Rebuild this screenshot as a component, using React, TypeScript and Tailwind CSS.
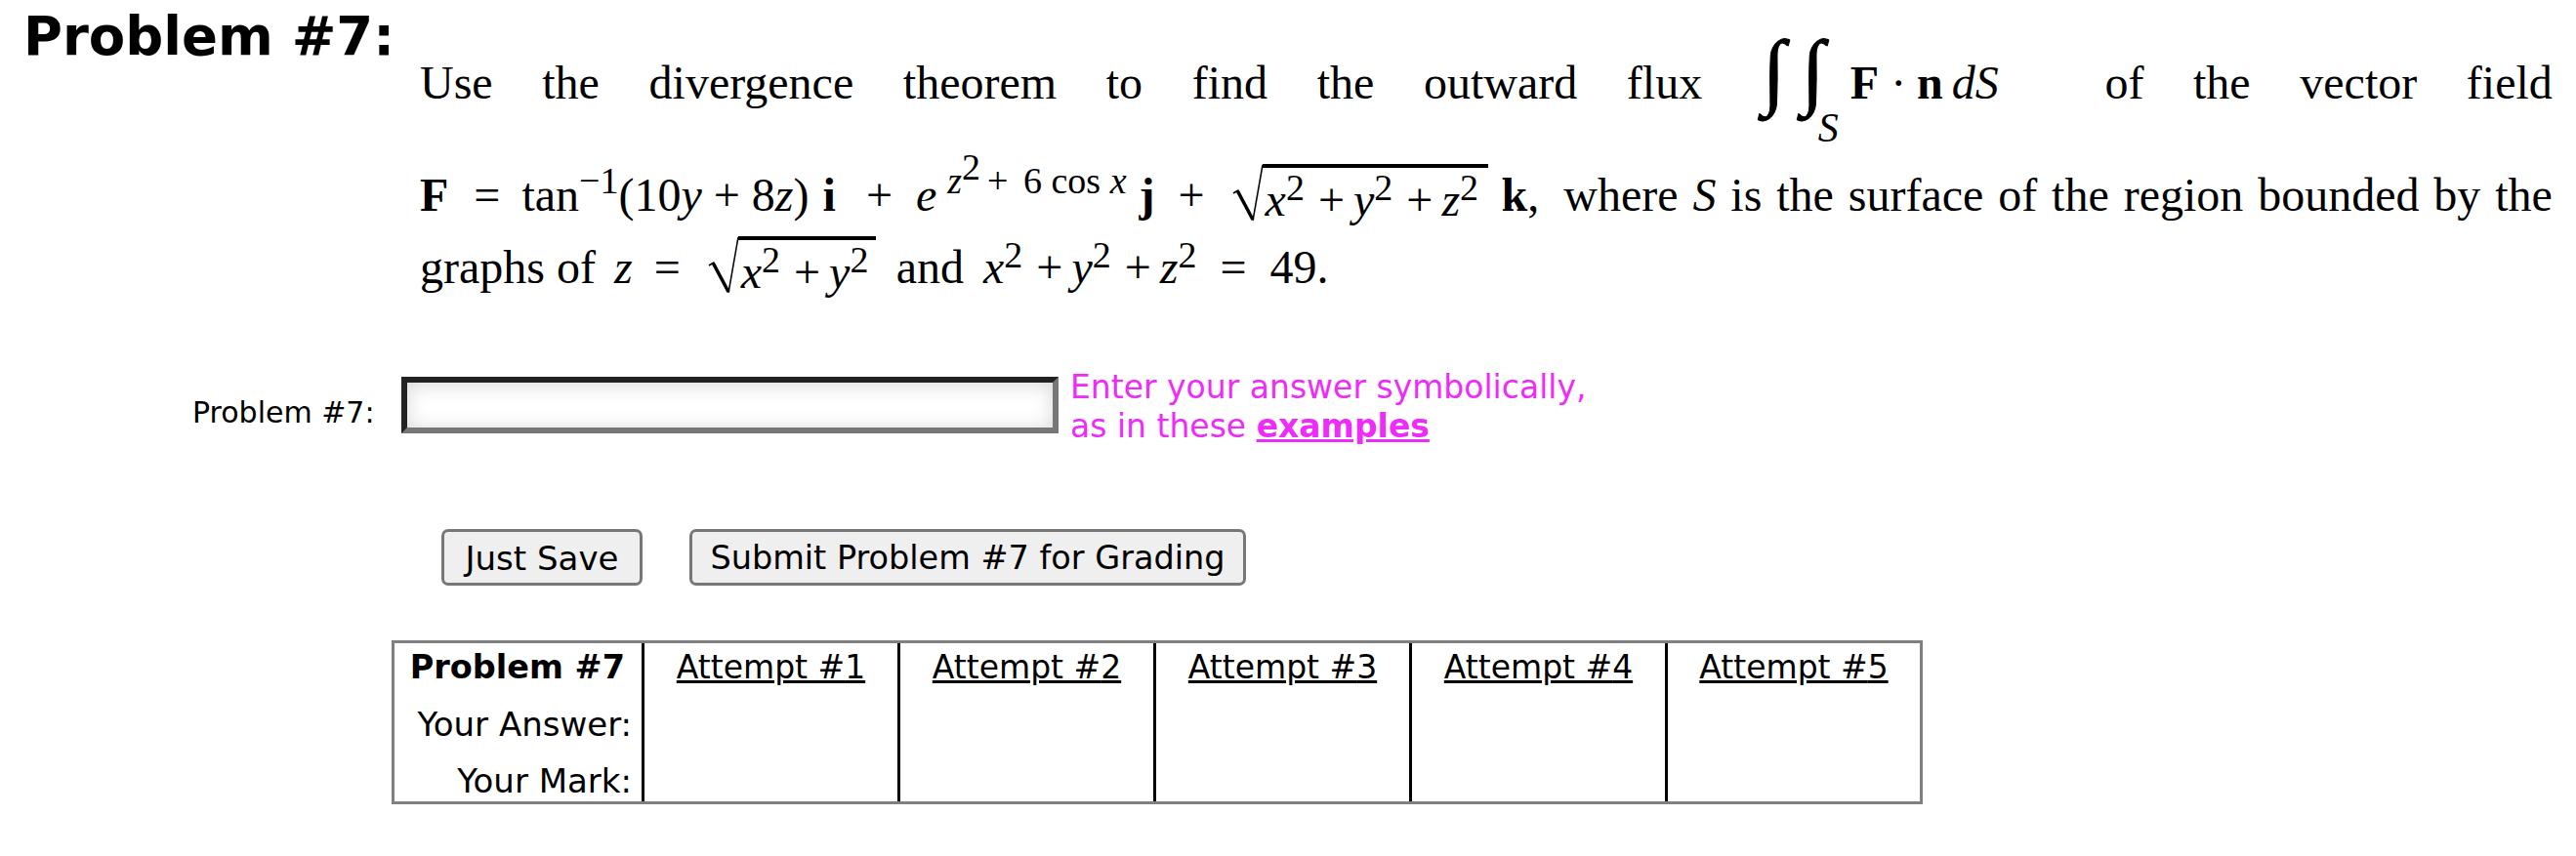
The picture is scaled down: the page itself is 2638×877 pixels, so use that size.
import type { ReactNode } from "react";

const serif = "font-['Liberation_Serif',serif]";
const sans = "font-['DejaVu_Sans',sans-serif]";

function Sup({ children }: { children: ReactNode }) {
  return <span className="align-[16px] text-[38px] leading-none not-italic">{children}</span>;
}

function I({ children }: { children: ReactNode }) {
  return <i>{children}</i>;
}

function Plus() {
  return <span className="ml-[14px] mr-[9px]">+</span>;
}

function Radical({ children, width }: { children: ReactNode; width: string }) {
  return (
    <span className="relative inline-block translate-y-[5px] pl-[31px]">
      <svg width="32" height="60" viewBox="0 0 32 60" className="absolute left-0 top-0">
        <path d="M1 30 L6 27" fill="none" stroke="#000" strokeWidth="1.5" />
        <path d="M5 27 L21 57" fill="none" stroke="#000" strokeWidth="3.5" />
        <path d="M21 58 L31 1" fill="none" stroke="#000" strokeWidth="1.5" />
      </svg>
      <span className={`${width} block border-t-[4px] border-black pl-[3px] leading-[66px] whitespace-nowrap`}>{children}</span>
    </span>
  );
}

function Attempt({ n }: { n: number }) {
  return (
    <td className="border-r-[3px] border-black text-center align-top pt-[5px] last:border-r-0">
      <a className="underline">Attempt #{n}</a>
    </td>
  );
}

function Blank() {
  return <td className="border-r-[3px] border-black last:border-r-0" />;
}

export default function App() {
  return (
    <div className={`w-[2638px] h-[877px] bg-white text-black overflow-hidden ${sans}`}>
      <h1 className="ml-[24px] pt-[5px] h-[56px] text-[54.5px] leading-[64px] font-bold">Problem #7:</h1>

      <div className={`ml-[430px] w-[2184px] text-[48px] ${serif}`}>
        <div className="flex h-[107px] items-baseline justify-between pt-[1px] leading-[56px]">
          <span>Use</span>
          <span>the</span>
          <span>divergence</span>
          <span>theorem</span>
          <span>to</span>
          <span>find</span>
          <span>the</span>
          <span>outward</span>
          <span>flux</span>
          <span className="flex w-[311px] items-baseline pl-[11px]">
            <span className="text-[86px] leading-[0px] w-[40px] [-webkit-text-stroke:1px_black]">∫</span>
            <span className="text-[86px] leading-[0px] w-[17px] [-webkit-text-stroke:1px_black]">∫</span>
            <i className="w-[33px] translate-y-[44px] text-[42px] leading-[0px]">S</i>
            <b>F</b>
            <span className="ml-[12px] mr-[11px]">·</span>
            <b>n</b>
            <i className="ml-[9px]">dS</i>
          </span>
          <span>of</span>
          <span>the</span>
          <span>vector</span>
          <span>field</span>
        </div>

        <div className="flex h-[74px] items-baseline leading-[56px] whitespace-nowrap">
          <b>F</b>
          <span className="ml-[26px]">=</span>
          <span className="ml-[22px]">
            tan<span className="align-[18px] text-[38px] leading-none">−1</span>(10<I>y</I> + 8<I>z</I>)
          </span>
          <b className="ml-[14px]">i</b>
          <span className="ml-[31px]">+</span>
          <I>
            <span className="ml-[24px]">e</span>
          </I>
          <span className="ml-[11px] -translate-y-[18px] text-[38px] leading-none">
            <I>z</I>
            <span className="align-[14px]">2</span>
            <span className="ml-[7px] mr-[6px]">+</span> 6 cos <I>x</I>
          </span>
          <b className="ml-[13px]">j</b>
          <span className="ml-[24px]">+</span>
          <span className="ml-[28px]">
            <Radical width="w-[231px]">
              <I>x</I>
              <Sup>2</Sup>
              <Plus />
              <I>y</I>
              <Sup>2</Sup>
              <Plus />
              <I>z</I>
              <Sup>2</Sup>
            </Radical>
          </span>
          <span className="ml-[14px]">
            <b>k</b>,
          </span>
          <span className="ml-[25px] flex flex-1 items-baseline justify-between">
            <span>where</span>
            <I>S</I>
            <span>is</span>
            <span>the</span>
            <span>surface</span>
            <span>of</span>
            <span>the</span>
            <span>region</span>
            <span>bounded</span>
            <span>by</span>
            <span>the</span>
          </span>
        </div>

        <div className="flex h-[60px] items-baseline leading-[56px] whitespace-nowrap">
          <span>graphs of</span>
          <I>
            <span className="ml-[19px]">z</span>
          </I>
          <span className="ml-[22px]">=</span>
          <span className="ml-[28px]">
            <Radical width="w-[141px]">
              <I>x</I>
              <Sup>2</Sup>
              <Plus />
              <I>y</I>
              <Sup>2</Sup>
            </Radical>
          </span>
          <span className="ml-[21px]">and</span>
          <span className="ml-[20px]">
            <I>x</I>
            <Sup>2</Sup>
            <Plus />
            <I>y</I>
            <Sup>2</Sup>
            <Plus />
            <I>z</I>
            <Sup>2</Sup>
          </span>
          <span className="ml-[24px]">=</span>
          <span className="ml-[24px]">49.</span>
        </div>
      </div>

      <div className="mt-[89px] flex items-start">
        <span className="ml-[197px] w-[214px] pt-[17px] text-[30px] leading-[40px]">Problem #7:</span>
        <input className="h-[58px] w-[673px] border-[6px] border-t-[#222] border-l-[#222] border-b-[#777] border-r-[#777] bg-white shadow-[inset_0_2px_20px_#d8d8d8] outline-none" />
        <div className="ml-[12px] -mt-[9px] text-[33px] text-[#ee2cf9] leading-[40px]">
          Enter your answer symbolically,
          <br />
          as in these <a className="font-bold underline">examples</a>
        </div>
      </div>

      <div className="ml-[452px] mt-[85px] flex gap-[48px] text-[33.5px]">
        <button className="h-[58px] w-[206px] rounded-[7px] border-[3px] border-[#777] bg-[#efefef] pt-[2px] text-[34px]">Just Save</button>
        <button className="h-[58px] w-[570px] rounded-[7px] border-[3px] border-[#777] bg-[#efefef] pt-[2px]">Submit Problem #7 for Grading</button>
      </div>

      <table className="ml-[401px] mt-[56px] w-[1568px] table-fixed border-separate border-spacing-0 border-[3px] border-[#808080] text-[33px] leading-[40px]">
        <colgroup>
          <col className="w-[256px]" />
          <col className="w-[262px]" />
          <col className="w-[262px]" />
          <col className="w-[262px]" />
          <col className="w-[262px]" />
          <col className="w-[258px]" />
        </colgroup>
        <tbody>
          <tr className="h-[56px]">
            <td className="border-r-[3px] border-black pr-[17px] pt-[5px] text-right align-top text-[33.5px] font-bold">Problem #7</td>
            <Attempt n={1} />
            <Attempt n={2} />
            <Attempt n={3} />
            <Attempt n={4} />
            <Attempt n={5} />
          </tr>
          <tr className="h-[58px]">
            <td className="border-r-[3px] border-black pr-[10px] pt-[7px] text-right align-top text-[34px] whitespace-nowrap">Your Answer:</td>
            <Blank />
            <Blank />
            <Blank />
            <Blank />
            <Blank />
          </tr>
          <tr className="h-[48px]">
            <td className="border-r-[3px] border-black pr-[10px] pt-[7px] text-right align-top text-[34px] whitespace-nowrap">Your Mark:</td>
            <Blank />
            <Blank />
            <Blank />
            <Blank />
            <Blank />
          </tr>
        </tbody>
      </table>
    </div>
  );
}
